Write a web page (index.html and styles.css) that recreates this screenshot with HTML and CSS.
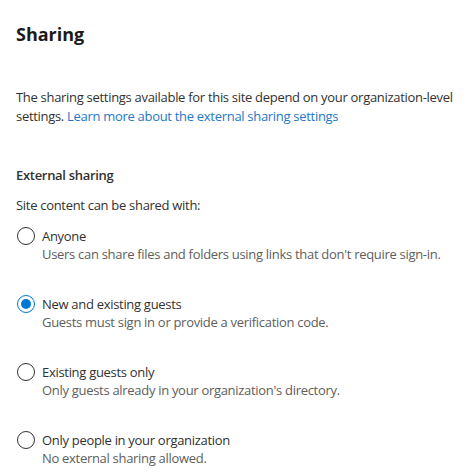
FILE: index.html
```html
<!DOCTYPE html>
<html lang="en">
<head>
<meta charset="utf-8">
<title>Sharing</title>
<link rel="stylesheet" href="styles.css">
</head>
<body>
<main class="page">
  <h1 class="title">Sharing</h1>
  <p class="intro">The sharing settings available for this site depend on your organization-level settings. <a class="link" href="#">Learn more about the external sharing settings</a></p>
  <h2 class="section">External sharing</h2>
  <p class="prompt">Site content can be shared with:</p>
  <div class="options" role="radiogroup">
    <div class="option">
      <span class="radio"></span>
      <div class="option-text">
        <div class="label">Anyone</div>
        <div class="desc">Users can share files and folders using links that don't require sign-in.</div>
      </div>
    </div>
    <div class="option">
      <span class="radio checked"></span>
      <div class="option-text">
        <div class="label">New and existing guests</div>
        <div class="desc">Guests must sign in or provide a verification code.</div>
      </div>
    </div>
    <div class="option">
      <span class="radio"></span>
      <div class="option-text">
        <div class="label">Existing guests only</div>
        <div class="desc">Only guests already in your organization's directory.</div>
      </div>
    </div>
    <div class="option">
      <span class="radio"></span>
      <div class="option-text">
        <div class="label">Only people in your organization</div>
        <div class="desc">No external sharing allowed.</div>
      </div>
    </div>
  </div>
</main>
</body>
</html>
```
FILE: styles.css
```css
html, body {
  margin: 0;
  padding: 0;
  background: #ffffff;
}
body {
  font-family: "Open Sans", "Noto Sans", sans-serif;
  font-size: 13px;
  letter-spacing: -0.3px;
  color: #323130;
}
.page {
  padding: 20px 16px 0 16px;
}
.title {
  margin: 0;
  font-size: 18px;
  line-height: 28px;
  font-weight: 700;
  letter-spacing: 0;
  color: #1b1a19;
}
.intro {
  margin: 40px 0 0 0;
  line-height: 19px;
  color: #323130;
}
.link {
  color: #1f78c8;
  text-decoration: none;
}
.section {
  margin: 39px 0 0 0;
  font-size: 13px;
  line-height: 20px;
  font-weight: 600;
  color: #323130;
}
.prompt {
  margin: 10px 0 0 0;
  line-height: 20px;
}
.options {
  margin-top: 12px;
  display: flex;
  flex-direction: column;
  gap: 32px;
}
.option {
  display: flex;
  align-items: flex-start;
  gap: 7px;
}
.radio {
  flex: none;
  box-sizing: border-box;
  width: 18px;
  height: 18px;
  margin-left: 1px;
  border: 1px solid #323130;
  border-radius: 50%;
  display: flex;
  align-items: center;
  justify-content: center;
}
.radio.checked {
  border-color: #0078d4;
}
.radio.checked::after {
  content: "";
  width: 10px;
  height: 10px;
  border-radius: 50%;
  background: #0078d4;
}
.label {
  line-height: 18px;
  color: #323130;
}
.desc {
  line-height: 18px;
  color: #605e5c;
}
```
